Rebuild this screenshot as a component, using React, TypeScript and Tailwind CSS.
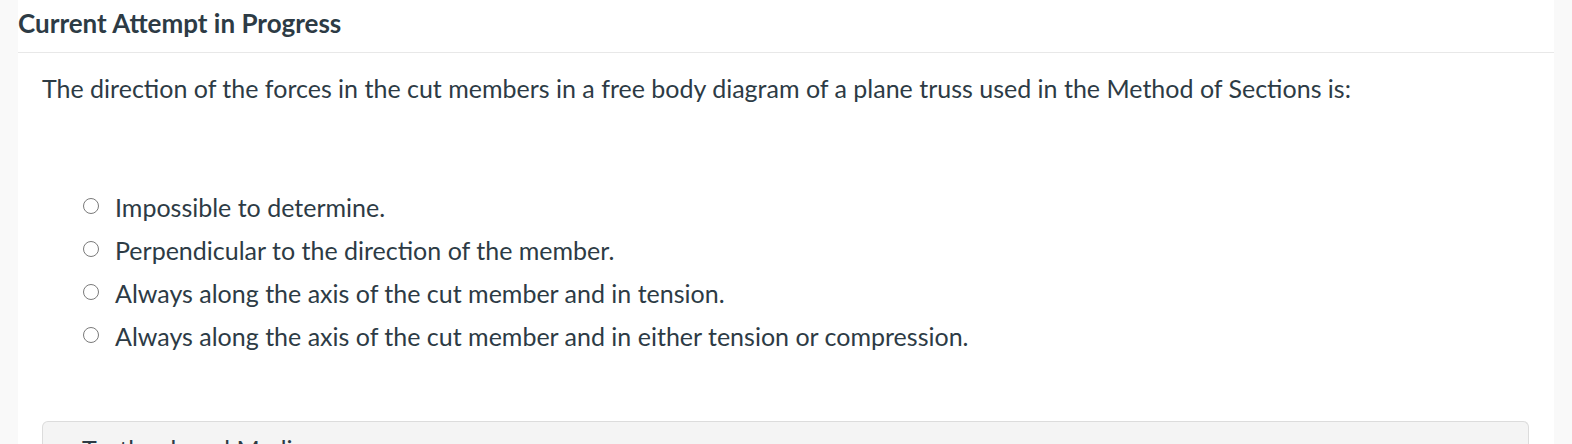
const options = [
  'Impossible to determine.',
  'Perpendicular to the direction of the member.',
  'Always along the axis of the cut member and in tension.',
  'Always along the axis of the cut member and in either tension or compression.',
];

export default function App() {
  return (
    <div
      className="flex h-[444px] w-full overflow-hidden bg-[#f9f9f9] text-[#2d3b45]"
      style={{ fontFamily: 'Lato, "Open Sans", sans-serif' }}
    >
      <div className="w-[18px] shrink-0" />
      <div className="flex-1 bg-white">
        <div className="flex h-[53px] items-start border-b border-[#e8e8e8]">
          <h2 className="pt-[8px] text-[26px] font-bold leading-[30px]">Current Attempt in Progress</h2>
        </div>
        <div className="pl-6 pr-[25px]">
          <p className="pt-[20px] text-[25px] leading-[30px]">
            The direction of the forces in the cut members in a free body diagram of a plane truss used in the Method of
            Sections is:
          </p>
          <ul className="mt-[89px] flex flex-col gap-[13px] pl-[41px]">
            {options.map((opt) => (
              <li key={opt} className="flex items-center gap-[16px] text-[25px] leading-[30px]">
                <span className="-mt-[2px] h-[16px] w-[16px] shrink-0 rounded-full border-[1.5px] border-[#7a7a7a]" />
                {opt}
              </li>
            ))}
          </ul>
          <div className="mt-[70px] h-[40px] rounded-t-md border border-b-0 border-[#dcdcdc] bg-[#f4f4f4] px-[39px] pt-[12px]">
            <span className="text-[25px] leading-[30px]">Textbook and Media</span>
          </div>
        </div>
      </div>
      <div className="w-[18px] shrink-0" />
    </div>
  );
}
